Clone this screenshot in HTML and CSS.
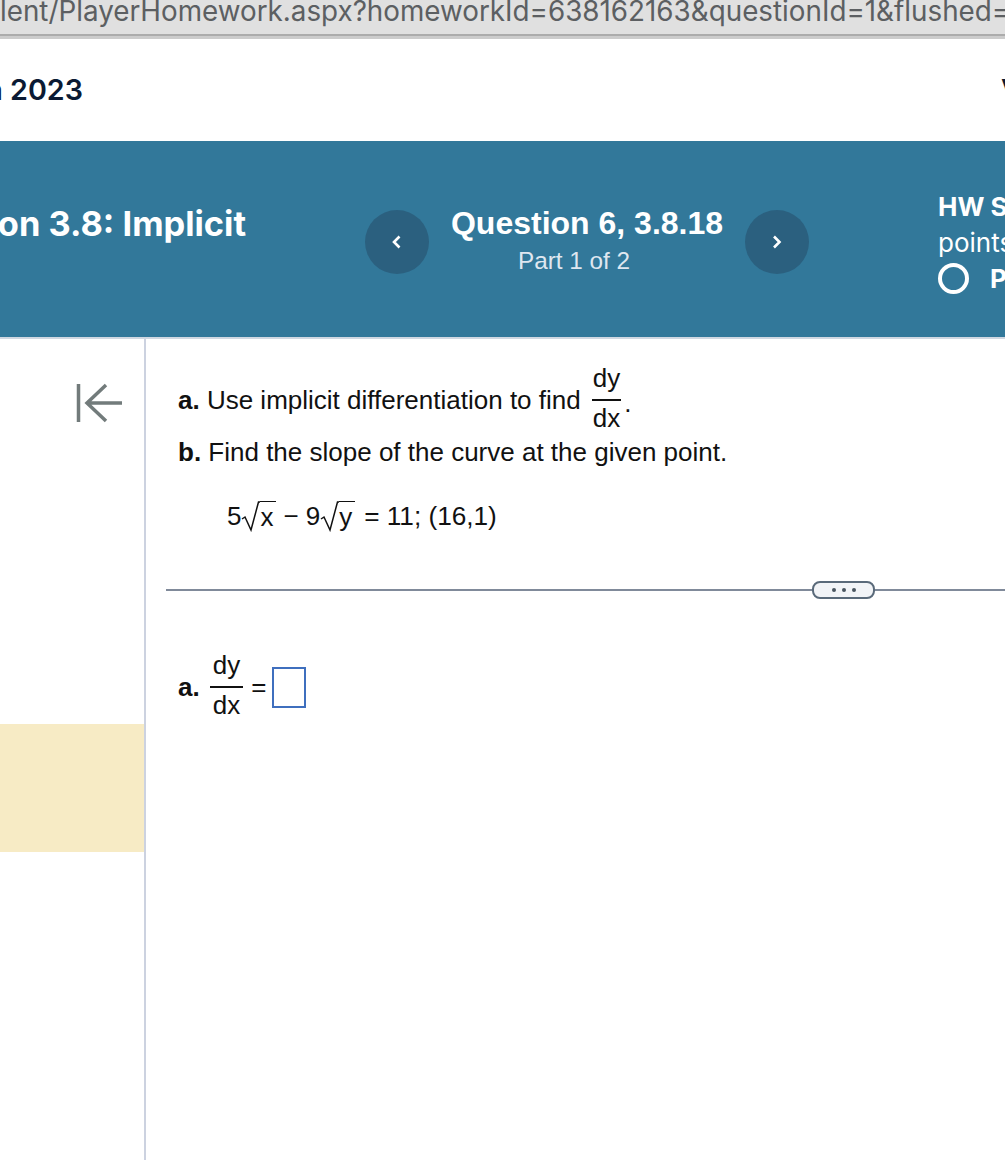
FILE: index.html
```html
<!DOCTYPE html>
<html lang="en">
  <head>
    <meta charset="UTF-8" />
    <title>Homework Player</title>
    <link rel="stylesheet" href="styles.css">
  </head>
  <body>
    <div class="addressBar">lent/PlayerHomework.aspx?homeworkId=638162163&amp;questionId=1&amp;flushed=</div>

    <div class="titleRow">
      <div class="courseName"><span>n 2023</span></div>
      <div class="userName">V</div>
    </div>

    <div class="banner">
      <div class="sectionName"><span>Section 3.8: Implicit</span></div>
      <div class="questionNav">
        <button class="navBtn">
          <svg width="12" height="16" viewBox="0 0 12 16"><path d="M8.5 2.5 3 8 8.5 13.5"/></svg>
        </button>
        <div class="questionInfo">
          <div class="questionName">Question 6, 3.8.18</div>
          <div class="questionPart">Part 1 of 2</div>
        </div>
        <button class="navBtn">
          <svg width="12" height="16" viewBox="0 0 12 16"><path d="M3 2.5 8.5 8 3 13.5"/></svg>
        </button>
      </div>
      <div class="scoreBox">
        <div class="scoreName">HW Score</div>
        <div class="scorePoints">points</div>
        <div class="scoreStatus"><span class="statusRing"></span><b>Points</b></div>
      </div>
    </div>

    <div class="main">
      <div class="sidebar">
        <svg class="collapseIcon" width="48" height="42" viewBox="0 0 48 42">
          <path d="M3.5 2V40M47 21H12M31 3 12 21 31 39"/>
        </svg>
        <div class="currentItem"></div>
      </div>

      <div class="content">
        <div class="question">
          <div class="line lineFirst">
            <b>a.</b>&nbsp;Use implicit differentiation to find
            <span class="fraction"><span class="top">dy</span><span class="bottom">dx</span></span><span class="period">.</span>
          </div>
          <div class="line"><b>b.</b> Find the slope of the curve at the given point.</div>
          <div class="equation">
            5<span class="root"><svg width="19" height="31" viewBox="0 0 19 31"><path d="M1 18 4 16 10 29 17.5 1H19"/></svg><span class="radicand">x</span></span><span class="minus">&minus;</span>9<span class="root"><svg width="19" height="31" viewBox="0 0 19 31"><path d="M1 18 4 16 10 29 17.5 1H19"/></svg><span class="radicand">y</span></span><span class="equationEnd">= 11; (16,1)</span>
          </div>
        </div>

        <div class="divider">
          <div class="dividerLine lineLeft"></div>
          <button class="moreBtn"><i></i><i></i><i></i></button>
          <div class="dividerLine"></div>
        </div>

        <div class="answer">
          <b>a.</b>
          <span class="fraction answerFraction"><span class="top">dy</span><span class="bottom">dx</span></span>
          <span class="equals">=</span>
          <span class="answerBox"></span>
        </div>
      </div>
    </div>
  </body>
</html>
```

FILE: styles.css
```css
html,
body {
  margin: 0;
  padding: 0;
  height: 1160px;
  overflow: hidden;
  background-color: white;
  font-family: "Liberation Sans", Arial, sans-serif;
}

.addressBar {
  height: 34px;
  line-height: 23px;
  background-color: #e0e0e0;
  border-bottom: 2px solid #acacac;
  color: #5c5f62;
  font-family: Inter, sans-serif;
  font-size: 27.8px;
  white-space: nowrap;
  overflow: hidden;
}

.titleRow {
  display: flex;
  height: 105px;
  border-top: 3px solid #cccccc;
  box-sizing: border-box;
  padding-top: 33px;
  font-family: Inter, sans-serif;
  font-size: 28.7px;
  font-weight: 600;
  color: #0b1a33;
  white-space: nowrap;
}

.courseName {
  width: 83px;
  flex-shrink: 0;
  display: flex;
  justify-content: flex-end;
  overflow: hidden;
}

.userName {
  flex: 1;
  min-width: 0;
  overflow: hidden;
  margin-left: 918px;
}

.banner {
  display: flex;
  height: 196px;
  background-color: #32789a;
  color: white;
  border-bottom: 2px solid #d0d8e2;
  white-space: nowrap;
}

.sectionName {
  width: 246px;
  flex-shrink: 0;
  display: flex;
  justify-content: flex-end;
  overflow: hidden;
  margin-top: 62px;
  font-family: Inter, sans-serif;
  font-size: 34.4px;
  font-weight: 700;
  line-height: 42px;
}

.questionNav {
  display: flex;
  flex-shrink: 0;
  margin-left: 119px;
  margin-top: 69px;
  width: 444px;
  justify-content: space-between;
}

.navBtn {
  width: 64px;
  height: 64px;
  border: none;
  border-radius: 50%;
  background-color: #2b607f;
  padding: 0;
  display: flex;
  align-items: center;
  justify-content: center;
}

.navBtn svg {
  fill: none;
  stroke: white;
  stroke-width: 2.6;
}

.questionInfo {
  margin-top: -6px;
  text-align: center;
}

.questionName {
  font-size: 32px;
  font-weight: bold;
  line-height: 38px;
}

.questionPart {
  margin-top: 5px;
  padding-right: 26px;
  font-size: 24.3px;
  line-height: 28px;
  color: #dfe7f0;
}

.scoreBox {
  flex: 1;
  min-width: 0;
  overflow: hidden;
  margin-left: 129px;
  margin-top: 50px;
  font-family: Inter, sans-serif;
  font-size: 26px;
}

.scoreName {
  font-weight: 700;
  line-height: 32px;
}

.scorePoints {
  margin-top: 4px;
  line-height: 32px;
}

.scoreStatus {
  display: flex;
  align-items: center;
  gap: 21px;
  margin-top: 4px;
}

.statusRing {
  width: 31px;
  height: 31px;
  flex-shrink: 0;
  box-sizing: border-box;
  border: 4px solid white;
  border-radius: 50%;
}

.main {
  display: flex;
  height: 821px;
}

.sidebar {
  width: 144px;
  flex-shrink: 0;
  border-right: 2px solid #ccd2e0;
}

.collapseIcon {
  display: block;
  margin: 43px 0 0 75px;
  fill: none;
  stroke: #727b7b;
  stroke-width: 3.5;
}

.currentItem {
  height: 128px;
  margin-top: 300px;
  background-color: #f7ebc5;
}

.content {
  flex: 1;
  min-width: 0;
  font-size: 26px;
  color: #111111;
}

.question {
  padding: 22px 0 0 32px;
}

.line {
  line-height: 32px;
  white-space: nowrap;
}

.lineFirst {
  display: flex;
  align-items: center;
  box-sizing: border-box;
  height: 74px;
  padding-top: 4px;
  margin-bottom: 1px;
}

.fraction {
  display: inline-flex;
  flex-direction: column;
  align-items: center;
  margin-left: 11px;
  margin-bottom: 4px;
}

.fraction .top {
  padding: 0 1px 6px;
  line-height: 30px;
}

.fraction .bottom {
  padding: 1px 1px 0;
  border-top: 2px solid #111111;
  line-height: 32px;
  align-self: stretch;
  text-align: center;
}

.period {
  margin: 0 0 -6px 3px;
}

.equation {
  display: flex;
  align-items: center;
  margin: 31px 0 0 49px;
  height: 34px;
}

.root {
  display: inline-flex;
  align-items: flex-start;
  margin-top: 2px;
}

.root svg {
  fill: none;
  stroke: #111111;
  stroke-width: 1.5;
}

.radicand {
  border-top: 1.5px solid #111111;
  line-height: 31px;
  padding: 0 3px 0 0;
}

.minus {
  margin: 0 7px;
}

.equationEnd {
  margin-left: 9px;
  font-size: 26.2px;
}

.divider {
  display: flex;
  align-items: center;
  margin: 48px 0 0 20px;
  height: 18px;
}

.dividerLine {
  flex: 1;
  height: 2px;
  background-color: #808a9a;
}

.lineLeft {
  flex: 0 0 646px;
}

.moreBtn {
  width: 63px;
  height: 18px;
  flex-shrink: 0;
  box-sizing: border-box;
  padding: 0;
  border: 2px solid #5a6a7a;
  border-radius: 8px;
  background-color: #f2f4f7;
  display: flex;
  align-items: center;
  justify-content: center;
  gap: 6px;
}

.moreBtn i {
  width: 4px;
  height: 4px;
  border-radius: 50%;
  background-color: #4a5560;
}

.answer {
  display: flex;
  align-items: center;
  margin: 51px 0 0 32px;
}

.answerFraction {
  margin-left: 10px;
}

.answerFraction .top,
.answerFraction .bottom {
  padding-left: 3px;
  padding-right: 3px;
}

.equals {
  margin-left: 8px;
}

.answerBox {
  width: 34px;
  height: 41px;
  box-sizing: border-box;
  margin-left: 6px;
  border: 2px solid #3f6fbe;
}
```
